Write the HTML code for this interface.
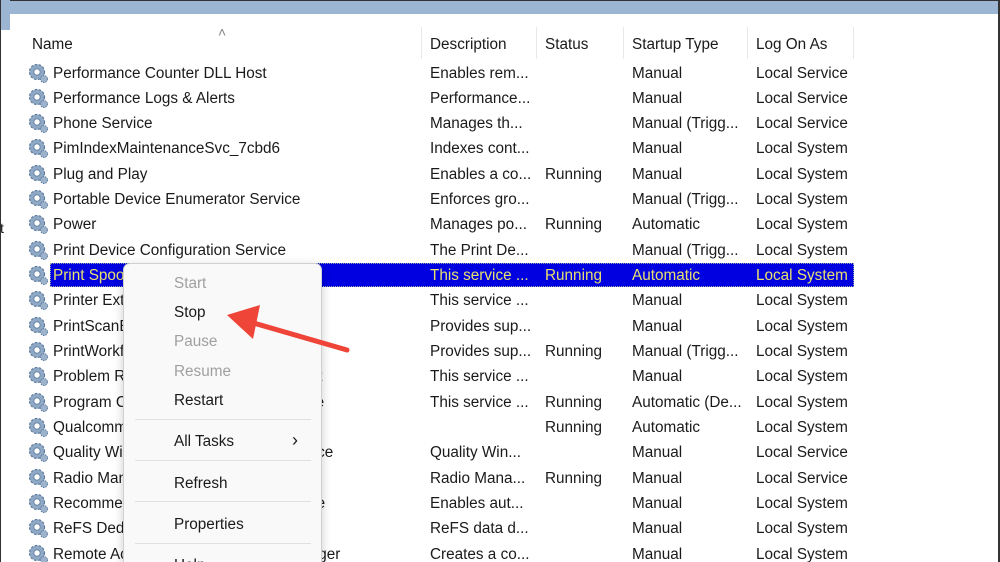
<!DOCTYPE html>
<html style="width:1000px;height:562px;overflow:hidden"><head><meta charset="utf-8"><style>
*{margin:0;padding:0;box-sizing:border-box}
body{width:1000px;height:562px;overflow:hidden;background:#fff;font-family:"Liberation Sans",sans-serif;font-size:15.3px;color:#1a1a1a;position:relative}
.top{position:absolute;left:0;top:0;width:1000px;height:14px;background:#9bb5d3;border-top:1px solid #333}
.lft{position:absolute;left:0;top:0;width:10px;height:30px;background:#9bb5d3}
.panel{position:absolute;left:10px;top:14px;width:990px;height:548px;background:#fff;border-top-left-radius:10px}
.bl{position:absolute;left:0;top:0;width:1px;height:562px;background:#333}
.br{position:absolute;right:0;top:0;width:2px;height:562px;background:#333}
.t{position:absolute;white-space:nowrap;line-height:20px}
.sep{position:absolute;top:27px;width:1px;height:32px;background:#e8e8e8}
.sel{position:absolute;left:50px;top:263px;width:804px;height:24px;background:#0000e0;border:1px dotted #9aa}
.y{color:#e8e070}
.menu{position:absolute;left:123px;top:263px;width:199px;height:310px;background:#f9f9f9;border:1px solid #d0d0d0;border-radius:7px;box-shadow:0 3px 10px rgba(0,0,0,.2)}
.mi{position:absolute;left:50px;white-space:nowrap;line-height:20px;color:#1a1a1a}
.dis{color:#a0a0a0}
.ms{position:absolute;left:11px;width:176px;height:1px;background:#e0e0e0}
</style></head><body>
<div class="top"></div><div class="lft"></div>
<div class="panel"></div>
<div class="bl"></div><div class="br"></div>
<div class="t" style="left:218px;top:22px;color:#888;font-size:14px">&#x2C4;</div>
<div class="t" style="left:32px;top:35px">Name</div>
<div class="t" style="left:430px;top:35px">Description</div>
<div class="t" style="left:545px;top:35px">Status</div>
<div class="t" style="left:632px;top:35px">Startup Type</div>
<div class="t" style="left:756px;top:35px">Log On As</div>
<div class="sep" style="left:421px"></div><div class="sep" style="left:536px"></div><div class="sep" style="left:623px"></div><div class="sep" style="left:747px"></div><div class="sep" style="left:853px"></div>
<div class="t" style="left:0;top:218px;font-size:14px">t</div>
<div class="sel"></div>
<svg width="0" height="0" style="position:absolute"><defs><g id="g"><circle cx="9" cy="9" r="7.5" fill="#8fa8c4" stroke="#5d7a9e" stroke-width="1.2" stroke-dasharray="2.5 1.6"/><circle cx="9" cy="9" r="3.2" fill="#fff" stroke="#6a87aa"/><circle cx="16" cy="16" r="3.5" fill="#9db3cc" stroke="#5d7a9e" stroke-width="1" stroke-dasharray="1.5 1"/></g></defs></svg>
<div id="rows"></div>
<script>
var R=[["Performance Counter DLL Host","Enables rem...","","Manual","Local Service"],
["Performance Logs & Alerts","Performance...","","Manual","Local Service"],
["Phone Service","Manages th...","","Manual (Trigg...","Local Service"],
["PimIndexMaintenanceSvc_7cbd6","Indexes cont...","","Manual","Local System"],
["Plug and Play","Enables a co...","Running","Manual","Local System"],
["Portable Device Enumerator Service","Enforces gro...","","Manual (Trigg...","Local System"],
["Power","Manages po...","Running","Automatic","Local System"],
["Print Device Configuration Service","The Print De...","","Manual (Trigg...","Local System"],
["Print Spooler","This service ...","Running","Automatic","Local System"],
["Printer Extensions","This service ...","","Manual","Local System"],
["PrintScanBrokerService","Provides sup...","","Manual","Local System"],
["PrintWorkflow","Provides sup...","Running","Manual (Trigg...","Local System"],
["Problem Reports Control Panel Support","This service ...","","Manual","Local System"],
["Program Compatibility Assistant Service","This service ...","Running","Automatic (De...","Local System"],
["Qualcomm Wireless Service","","Running","Automatic","Local System"],
["Quality Windows Audio Video Experience","Quality Win...","","Manual","Local Service"],
["Radio Management Service","Radio Mana...","Running","Manual","Local Service"],
["Recommended Troubleshooting Service","Enables aut...","","Manual","Local System"],
["ReFS Dedup Service","ReFS data d...","","Manual","Local System"],
["Remote Access Auto Connection Manager","Creates a co...","","Manual","Local System"]];
var X=[53,430,545,632,756],h="";
R.forEach(function(r,i){var y=63.5+25.33*i;
h+='<svg style="position:absolute;left:28px;top:'+(y-1)+'px" width="22" height="22"><use href="#g"/></svg>';
r.forEach(function(c,j){h+='<div class="t'+(i==8?' y':'')+'" style="left:'+X[j]+'px;top:'+y+'px">'+c.replace("&","&amp;")+'</div>';});});
document.getElementById("rows").innerHTML=h;
</script>
<div class="menu">
<div class="mi dis" style="top:10px">Start</div>
<div class="mi" style="top:39px">Stop</div>
<div class="mi dis" style="top:68px">Pause</div>
<div class="mi dis" style="top:98px">Resume</div>
<div class="mi" style="top:127px">Restart</div>
<div class="ms" style="top:155px"></div>
<div class="mi" style="top:168px">All Tasks</div>
<div class="mi" style="left:168px;top:166px;font-size:18px">&#x203A;</div>
<div class="ms" style="top:196px"></div>
<div class="mi" style="top:210px">Refresh</div>
<div class="ms" style="top:237px"></div>
<div class="mi" style="top:251px">Properties</div>
<div class="ms" style="top:279px"></div>
<div class="mi" style="top:292px">Help</div>
</div>
<svg style="position:absolute;left:0;top:0" width="1000" height="562">
<line x1="347" y1="350" x2="250" y2="322" stroke="#ef4438" stroke-width="5" stroke-linecap="round"/>
<polygon points="227,315 260,305 253,339" fill="#ef4438"/>
</svg>
</body></html>
